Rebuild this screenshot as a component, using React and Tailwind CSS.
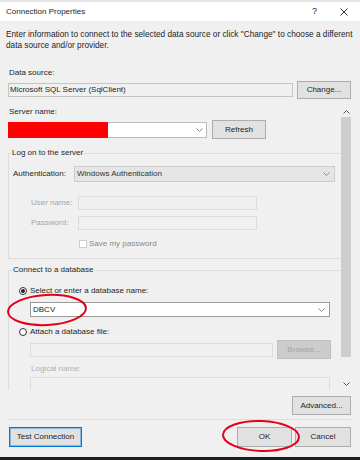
const Chevron = ({ up = false, down = false }) => (
  <svg width="7" height="4" viewBox="0 0 7 4" className="shrink-0">
    <polyline
      points={up ? "0.5,3.5 3.5,0.5 6.5,3.5" : "0.5,0.5 3.5,3.5 6.5,0.5"}
      fill="none"
      stroke={up || down ? "#555555" : "#8a8a8a"}
      strokeWidth="1"
    />
  </svg>
);

const Button = ({ children, className = "", disabled = false }) => (
  <button
    className={`flex shrink-0 items-center justify-center border text-[8px] leading-none ${
      disabled
        ? "border-[#bfbfbf] bg-[#cccccc] text-[#a3a3a3]"
        : "border-[#adadad] bg-[#e1e1e1] text-[#1e1e1e]"
    } ${className}`}
  >
    {children}
  </button>
);

const Radio = ({ checked = false }) => (
  <span className="flex h-[8px] w-[8px] shrink-0 items-center justify-center rounded-full border border-[#333333] bg-white">
    {checked && <span className="h-[4px] w-[4px] rounded-full bg-[#222222]" />}
  </span>
);

const App = () => {
  return (
    <div className="relative flex h-[460px] w-[360px] flex-col overflow-hidden bg-[#f0f0f0] font-['Liberation_Sans',Arial,sans-serif] text-[8px] text-[#1e1e1e]">
      {/* Top strip */}
      <div className="h-[2px] shrink-0 bg-[#e4e4e4]" />

      {/* Title bar */}
      <div className="flex h-[19px] shrink-0 items-center justify-between bg-white pl-[6px] pr-[12px]">
        <span className="leading-none">Connection Properties</span>
        <div className="flex items-center">
          <span className="mr-[23px] text-[9px] leading-none">?</span>
          <svg width="8" height="8" viewBox="0 0 8 8">
            <path d="M0.5 0.5 L7.5 7.5 M7.5 0.5 L0.5 7.5" stroke="#333333" strokeWidth="1" />
          </svg>
        </div>
      </div>

      {/* Description */}
      <p className="mt-[8px] pl-[6px] text-[8.25px] leading-[11px]">
        Enter information to connect to the selected data source or click
        "Change" to choose a different
        <br />
        data source and/or provider.
      </p>

      {/* Data source */}
      <div className="mt-[17px] pl-[9px] leading-[10px]">Data source:</div>
      <div className="mt-[3px] flex h-[18px] items-center pl-[8px]">
        <div className="flex h-[14px] w-[285px] items-center border border-[#c4c4c4] bg-[#f0f0f0] pl-[1px] leading-none">
          Microsoft SQL Server (SqlClient)
        </div>
        <Button className="ml-[4px] h-[18px] w-[54px]">Change...</Button>
      </div>

      {/* Scroll panel */}
      <div className="mt-[8px] flex h-[283px] shrink-0">
        <div className="w-[341px] shrink-0 overflow-hidden">
          <div className="pl-[9px] leading-[10px]">Server name:</div>
          <div className="mt-[3px] flex h-[19px] items-center pl-[8px]">
            <div className="flex h-[16px] w-[199px] items-center border border-[#bcbcbc] bg-white pr-[3px]">
              <div className="-my-px -ml-px h-[16px] w-[100px] bg-[#ff0000]" />
              <div className="flex-1" />
              <Chevron />
            </div>
            <Button className="ml-[5px] h-[19px] w-[54px]">Refresh</Button>
          </div>

          {/* Log on to the server */}
          <fieldset className="ml-[8px] mt-[9px] w-[345px] border border-[#dcdcdc] pb-[10px]">
            <legend className="ml-[2px] px-[1px] leading-[10px]">Log on to the server</legend>
            <div className="mt-[8px] flex h-[16px] items-center pl-[4px]">
              <span className="w-[61px] leading-none">Authentication:</span>
              <div className="flex h-[16px] w-[261px] items-center justify-between border border-[#cccccc] bg-[#e5e5e5] pl-[2px] pr-[4px] leading-none text-[#333333]">
                Windows Authentication
                <Chevron />
              </div>
            </div>
            <div className="mt-[14px] flex h-[14px] items-center pl-[22px] text-[#a6a6a6]">
              <span className="w-[47px] leading-none">User name:</span>
              <div className="h-[14px] w-[179px] border border-[#dcdcdc] bg-[#f0f0f0]" />
            </div>
            <div className="mt-[6px] flex h-[14px] items-center pl-[22px] text-[#a6a6a6]">
              <span className="w-[47px] leading-none">Password:</span>
              <div className="h-[14px] w-[179px] border border-[#dcdcdc] bg-[#f0f0f0]" />
            </div>
            <div className="mt-[9px] flex h-[9px] items-center pl-[70px] text-[#8a8a8a]">
              <span className="h-[8px] w-[8px] border border-[#cfcfcf] bg-white" />
              <span className="ml-[2px] leading-none">Save my password</span>
            </div>
          </fieldset>

          {/* Connect to a database */}
          <fieldset className="ml-[8px] mt-[6px] w-[345px] border border-[#dcdcdc] pb-[20px]">
            <legend className="ml-[3px] px-[1px] leading-[10px]">Connect to a database</legend>
            <div className="mt-[11px] flex h-[10px] items-center pl-[10px]">
              <Radio checked />
              <span className="ml-[3px] leading-none">Select or enter a database name:</span>
            </div>
            <div className="ml-[21px] mt-[6px] flex h-[15px] w-[300px] items-center justify-between border border-[#9a9a9a] bg-white pl-[2px] pr-[4px] leading-none">
              DBCV
              <Chevron />
            </div>
            <div className="mt-[10px] flex h-[10px] items-center pl-[10px]">
              <Radio />
              <span className="ml-[3px] leading-none">Attach a database file:</span>
            </div>
            <div className="ml-[21px] mt-[3px] flex h-[19px] items-center">
              <div className="h-[14px] w-[243px] border border-[#dcdcdc] bg-[#f0f0f0]" />
              <Button disabled className="ml-[4px] h-[19px] w-[54px]">
                Browse...
              </Button>
            </div>
            <div className="ml-[22px] mt-[5px] leading-[10px] text-[#b0b0b0]">Logical name:</div>
            <div className="ml-[21px] mt-[3px] h-[14px] w-[300px] border border-[#dcdcdc] bg-[#f0f0f0]" />
          </fieldset>
        </div>

        {/* Scrollbar */}
        <div className="flex w-[10px] shrink-0 flex-col bg-[#f0f0f0]">
          <div className="flex h-[10px] items-center justify-center">
            <Chevron up />
          </div>
          <div className="h-[240px] bg-[#cdcdcd]" />
          <div className="flex-1" />
          <div className="flex h-[10px] items-center justify-center">
            <Chevron down />
          </div>
          <div className="h-[1px]" />
        </div>
      </div>

      {/* Advanced */}
      <div className="mt-[6px] flex justify-end pr-[9px]">
        <Button className="h-[19px] w-[59px]">Advanced...</Button>
      </div>

      <div className="mx-[9px] ml-[8px] mt-[4px] h-[1px] shrink-0 bg-[#dcdcdc]" />

      {/* Footer */}
      <div className="mt-[7px] flex h-[20px] shrink-0 items-center justify-between pl-[9px] pr-[9px]">
        <button className="flex h-[20px] w-[73px] items-center justify-center border border-[#0078d7] bg-[#e1e1e1] leading-none text-[#1e1e1e] outline outline-1 -outline-offset-2 outline-[#0078d7]/40">
          Test Connection
        </button>
        <div className="flex items-center">
          <Button className="h-[20px] w-[55px]">OK</Button>
          <Button className="ml-[3px] h-[20px] w-[56px]">Cancel</Button>
        </div>
      </div>

      {/* Taskbar edge */}
      <div className="mt-[10px] h-[3px] shrink-0 bg-[#1f1f1f]" />

      {/* Red annotation ellipses */}
      <svg className="pointer-events-none absolute inset-0" width="360" height="460" viewBox="0 0 360 460">
        <ellipse cx="47" cy="310" rx="39" ry="15" fill="none" stroke="#e3001b" strokeWidth="2" transform="rotate(-3 47 310)" />
        <ellipse cx="261" cy="436" rx="38" ry="15" fill="none" stroke="#e3001b" strokeWidth="2" transform="rotate(2 261 436)" />
      </svg>
    </div>
  );
};

export default App;
